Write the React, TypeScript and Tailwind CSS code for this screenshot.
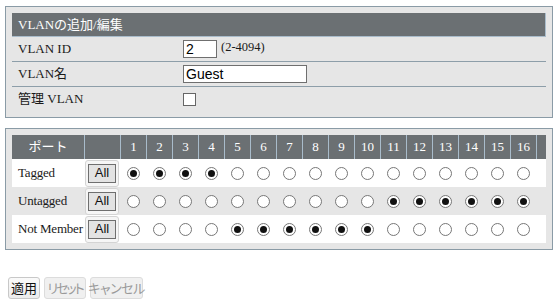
import React from "react";

const serif = "font-['Liberation_Serif','Noto_Sans_CJK_JP',serif]";

const tagged = [1, 1, 1, 1, 0, 0, 0, 0, 0, 0, 0, 0, 0, 0, 0, 0];
const untagged = [0, 0, 0, 0, 0, 0, 0, 0, 0, 0, 1, 1, 1, 1, 1, 1];
const notMember = [0, 0, 0, 0, 1, 1, 1, 1, 1, 1, 0, 0, 0, 0, 0, 0];

function Radio({ on }: { on: boolean }) {
  return (
    <span className="flex h-[13px] w-[13px] items-center justify-center rounded-full border border-[#777] bg-white">
      {on ? <span className="h-[7px] w-[7px] rounded-full bg-[#111]" /> : null}
    </span>
  );
}

function PortRow({ label, vals, bg }: { label: string; vals: number[]; bg: string }) {
  return (
    <div className={`grid h-[28px] grid-cols-[72px_36px_repeat(16,26px)_10px] items-center ${bg}`}>
      <div className={`${serif} whitespace-nowrap pl-[6px] text-[13px] tracking-[-0.2px] text-[#1a1a1a]`}>{label}</div>
      <div className="flex justify-center">
        <span className="flex h-[27px] w-[34px] items-center justify-center rounded-[3px] border border-[#d4d4d4] bg-[#f6f6f6]">
          <span className="flex h-[19px] w-[28px] items-center justify-center border border-[#6f6f6f] bg-[#e3e3e3] font-['Liberation_Sans',sans-serif] text-[13px] text-[#111]">
            All
          </span>
        </span>
      </div>
      {vals.map((v, i) => (
        <div key={i} className="flex justify-center">
          <Radio on={v === 1} />
        </div>
      ))}
      <div />
    </div>
  );
}

export default function App() {
  return (
    <div className="h-[305px] w-[559px] bg-white pl-[5px] pt-[6px]">
      {/* Panel 1 */}
      <div className="w-[548px] border border-[#8a9ba6] bg-[#e6e6e6] p-[6px]">
        <div className={`${serif} flex h-[24px] items-center border-b border-r border-[#a9bccb] bg-[#6b7073] pl-[6px] text-[13px] text-white`}>
          VLANの追加/編集
        </div>
        <div className="flex h-[25px] items-center border-b border-[#8d9ea9]">
          <div className={`${serif} w-[171px] pl-[6px] text-[13px] text-[#1a1a1a]`}>VLAN ID</div>
          <div className="flex items-start">
            <div className="flex h-[18px] w-[34px] items-center border border-[#6f6f6f] bg-white pl-[2px] font-['Liberation_Sans',sans-serif] text-[14px] text-black">
              2
            </div>
            <span className={`${serif} ml-[4px] -mt-[2px] text-[12.5px] text-[#1a1a1a]`}>(2-4094)</span>
          </div>
        </div>
        <div className="flex h-[25px] items-center border-b border-[#8d9ea9]">
          <div className={`${serif} w-[171px] pl-[6px] text-[13px] text-[#1a1a1a]`}>VLAN名</div>
          <div className="flex h-[18px] w-[124px] items-center border border-[#6f6f6f] bg-white pl-[2px] font-['Liberation_Sans',sans-serif] text-[14px] text-black">
            Guest
          </div>
        </div>
        <div className="flex h-[24px] items-center">
          <div className={`${serif} w-[171px] pl-[6px] text-[13px] text-[#1a1a1a]`}>管理 VLAN</div>
          <span className="h-[13px] w-[13px] border border-[#666] bg-white" />
        </div>
      </div>

      {/* Panel 2 */}
      <div className="mt-[10px] w-[548px] border border-[#8a9ba6] bg-[#e6e6e6] p-[6px]">
        <div className={`${serif} grid h-[24px] grid-cols-[72px_36px_repeat(16,26px)_10px] bg-[#6b7073] text-[13px] text-white`}>
          <div className="flex items-center justify-center">ポート</div>
          <div className="border-l border-[#a9bccb]" />
          {Array.from({ length: 16 }, (_, i) => (
            <div key={i} className="flex items-center justify-center border-l border-[#a9bccb]">
              {i + 1}
            </div>
          ))}
          <div className="border-l border-[#a9bccb]" />
        </div>
        <PortRow label="Tagged" vals={tagged} bg="bg-white" />
        <PortRow label="Untagged" vals={untagged} bg="bg-[#e6e6e6]" />
        <PortRow label="Not Member" vals={notMember} bg="bg-white" />
      </div>

      {/* Buttons */}
      <div className="mt-[27px] flex gap-[4px] pl-[3px] font-['Noto_Sans_CJK_JP',sans-serif] text-[13px] [font-feature-settings:'palt']">
        <button className="flex h-[22px] w-[32px] items-center justify-center whitespace-nowrap rounded-[3px] border border-[#c8c8c8] bg-gradient-to-b from-[#fafafa] to-[#ececec] text-[#111]">
          適用
        </button>
        <button className="flex h-[22px] w-[42px] items-center justify-center whitespace-nowrap rounded-[3px] border border-[#dcdcdc] bg-[#f0f0f0] tracking-[-2px] text-[#9a9a9a]">
          リセット
        </button>
        <button className="flex h-[22px] w-[53px] items-center justify-center whitespace-nowrap rounded-[3px] border border-[#dcdcdc] bg-[#f0f0f0] tracking-[-0.5px] text-[#9a9a9a]">
          キャンセル
        </button>
      </div>
    </div>
  );
}
